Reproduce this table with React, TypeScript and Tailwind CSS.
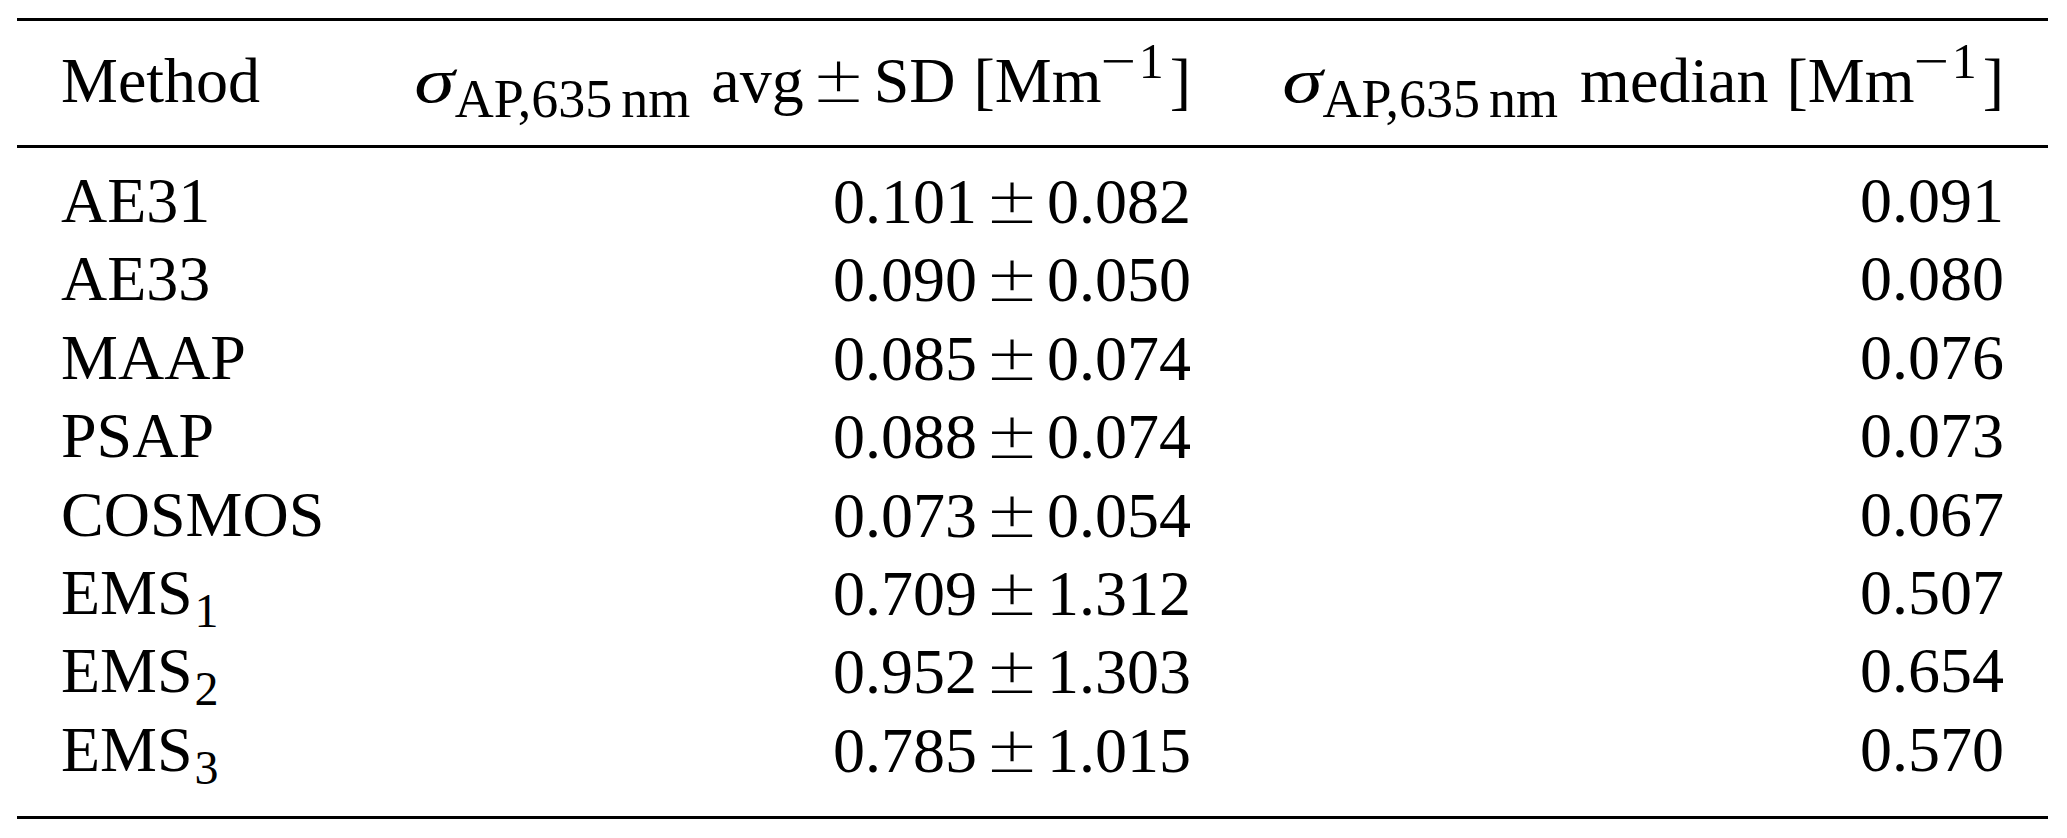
const rows = [
  { method: 'AE31', sub: '', avg: '0.101', sd: '0.082', median: '0.091' },
  { method: 'AE33', sub: '', avg: '0.090', sd: '0.050', median: '0.080' },
  { method: 'MAAP', sub: '', avg: '0.085', sd: '0.074', median: '0.076' },
  { method: 'PSAP', sub: '', avg: '0.088', sd: '0.074', median: '0.073' },
  { method: 'COSMOS', sub: '', avg: '0.073', sd: '0.054', median: '0.067' },
  { method: 'EMS', sub: '1', avg: '0.709', sd: '1.312', median: '0.507' },
  { method: 'EMS', sub: '2', avg: '0.952', sd: '1.303', median: '0.654' },
  { method: 'EMS', sub: '3', avg: '0.785', sd: '1.015', median: '0.570' },
];

// math-style ± is wider than the Times glyph; DejaVu's one has the right size
function PlusMinus() {
  return (
    <span className="inline-block w-[70px] text-center font-['DejaVu_Sans',serif] font-extralight">±</span>
  );
}

function Sigma() {
  return (
    <>
      <span className="inline-block italic ml-[8px] scale-x-[1.28] origin-right">σ</span>
      <span className="text-[54px] leading-none align-[-15px]">
        AP,635<span className="ml-[9px]">nm</span>
      </span>
    </>
  );
}

function Unit() {
  return (
    <span className="ml-[2px]">
      [Mm
      <span className="text-[50px] leading-none align-[24px]">
        <span className="inline-block ml-[3px] mr-[6px] scale-x-[1.25]">−</span>1
      </span>
      <span className="ml-[6px]">]</span>
    </span>
  );
}

export default function App() {
  return (
    <div className="min-h-screen bg-white pt-[18px] text-black font-['Liberation_Serif',serif] text-[64px]">
      <div className="ml-[17px] w-[2031px]">
        {/* top rule */}
        <div className="h-[3px] bg-black" />

        {/* header */}
        <div className="flex h-[124px] leading-[119px] whitespace-nowrap">
          <div className="w-[394px] pl-[44px]">Method</div>
          <div className="w-[780px] text-right">
            <Sigma />
            <span className="ml-[21px]">avg</span>
            <PlusMinus />SD <Unit />
          </div>
          <div className="w-[813px] text-right">
            <Sigma />
            <span className="ml-[22px] mr-[16px]">median</span>
            <Unit />
          </div>
        </div>

        {/* mid rule */}
        <div className="h-[3px] bg-black" />

        <div className="pt-[14px] pb-[27px]">
          {rows.map((r, i) => (
            <div key={i} className="flex h-[78.4px] leading-[78.4px] whitespace-nowrap">
              <div className="w-[394px] pl-[44px]">
                {r.method}
                {r.sub && <span className="ml-[2px] text-[48px] leading-none align-[-13px]">{r.sub}</span>}
              </div>
              <div className="w-[780px] text-right">
                {r.avg}
                <PlusMinus />
                {r.sd}
              </div>
              <div className="w-[813px] text-right">{r.median}</div>
            </div>
          ))}
        </div>

        {/* bottom rule */}
        <div className="h-[3px] bg-black" />
      </div>
    </div>
  );
}
